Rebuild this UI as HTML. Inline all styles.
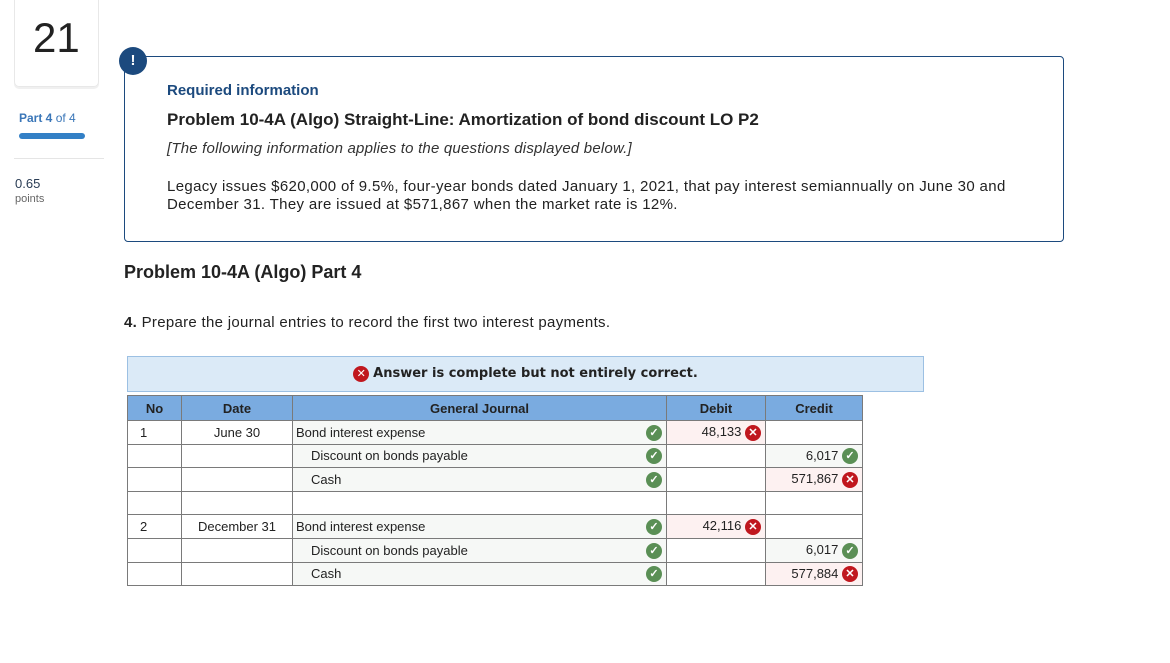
<!DOCTYPE html>
<html><head><meta charset="utf-8"><style>
body{margin:0;width:1170px;height:663px;background:#fff;font-family:"Liberation Sans",Arial,sans-serif;position:relative;overflow:hidden;color:#222}
.abs{position:absolute}
.card{left:14px;top:-10px;width:83px;height:95px;border:1px solid #e8e8e8;border-radius:5px;box-shadow:0 2px 0 #f0f0f0}
.box{left:124px;top:56px;width:938px;height:184px;border:1px solid #1c4a7e;border-radius:4px}
table{border-collapse:collapse;font-size:13px;position:absolute;left:127px;top:395px}
td,th{border:1px solid #7a7a7a;height:22.6px;padding:0 4px}
th{background:#7aabe0;font-weight:bold;font-size:13px;height:24px}
.ok,.x{display:inline-block;width:16px;height:16px;border-radius:50%;vertical-align:middle;position:relative;color:#fff;font-size:11px;line-height:16px;text-align:center;font-weight:bold}
.ok{background:#5a8f55}.x{background:#c0171e}
.gj{background:#f6f8f6}
.pink{background:#fdf1f1}
</style></head><body>
<div class="abs card"></div>
<div class="abs" style="left:33px;top:14px;font-size:42px;color:#222">21</div>
<div class="abs" style="left:19px;top:111px;font-size:12px;color:#3a76b8"><b>Part 4</b> of 4</div>
<div class="abs" style="left:19px;top:133px;width:66px;height:6px;border-radius:3px;background:#3380c6"></div>
<div class="abs" style="left:14px;top:158px;width:90px;height:1px;background:#e5e5e5"></div>
<div class="abs" style="left:15px;top:176px;font-size:13px;color:#2a3d55">0.65</div>
<div class="abs" style="left:15px;top:193px;font-size:11px;color:#666">points</div>
<div class="abs box"></div>
<div class="abs" style="left:119px;top:47px;width:28px;height:28px;border-radius:50%;background:#1c4a7e;color:#fff;text-align:center;line-height:28px;font-weight:bold;font-size:15px">!</div>
<div class="abs" style="left:167px;top:82px;font-size:15px;font-weight:bold;color:#1c4a7e">Required information</div>
<div class="abs" style="left:167px;top:110px;font-size:17px;font-weight:bold;color:#222">Problem 10-4A (Algo) Straight-Line: Amortization of bond discount LO P2</div>
<div class="abs" style="left:167px;top:140px;font-size:15px;font-style:italic;color:#333;letter-spacing:0.2px">[The following information applies to the questions displayed below.]</div>
<div class="abs" style="left:167px;top:178px;font-size:15px;line-height:18px;color:#222;letter-spacing:0.35px">Legacy issues $620,000 of 9.5%, four-year bonds dated January 1, 2021, that pay interest semiannually on June 30 and<br>December 31. They are issued at $571,867 when the market rate is 12%.</div>
<div class="abs" style="left:124px;top:262px;font-size:18px;font-weight:bold">Problem 10-4A (Algo) Part 4</div>
<div class="abs" style="left:124px;top:314px;font-size:15px;letter-spacing:0.3px"><b>4.</b> Prepare the journal entries to record the first two interest payments.</div>
<div class="abs" style="left:127px;top:356px;width:795px;height:34px;background:#dbeaf7;border:1px solid #9cc0e3;text-align:center;line-height:34px;font-size:13px;font-weight:bold;font-family:'DejaVu Sans',sans-serif"><span class="x" style="margin-right:4px">✕</span>Answer is complete but not entirely correct.</div>
<table>
<tr><th style="width:45px">No</th><th style="width:102px">Date</th><th colspan="2" style="width:365px">General Journal</th><th style="width:90px">Debit</th><th style="width:88px">Credit</th></tr>
<tr><td style="padding-left:12px">1</td><td style="text-align:center">June 30</td><td class="gj" style="border-right:0;width:335px;padding-left:3px">Bond interest expense</td><td class="gj" style="border-left:0;text-align:right"><span class="ok">✓</span></td><td class="pink" style="text-align:right">48,133 <span class="x">✕</span></td><td></td></tr>
<tr><td></td><td></td><td class="gj" style="border-right:0;padding-left:18px">Discount on bonds payable</td><td class="gj" style="border-left:0;text-align:right"><span class="ok">✓</span></td><td></td><td class="gj" style="text-align:right">6,017 <span class="ok">✓</span></td></tr>
<tr><td></td><td></td><td class="gj" style="border-right:0;padding-left:18px">Cash</td><td class="gj" style="border-left:0;text-align:right"><span class="ok">✓</span></td><td></td><td class="pink" style="text-align:right">571,867 <span class="x">✕</span></td></tr>
<tr><td></td><td></td><td colspan="2"></td><td></td><td></td></tr>
<tr><td style="padding-left:12px">2</td><td style="text-align:center">December 31</td><td class="gj" style="border-right:0;padding-left:3px">Bond interest expense</td><td class="gj" style="border-left:0;text-align:right"><span class="ok">✓</span></td><td class="pink" style="text-align:right">42,116 <span class="x">✕</span></td><td></td></tr>
<tr><td></td><td></td><td class="gj" style="border-right:0;padding-left:18px">Discount on bonds payable</td><td class="gj" style="border-left:0;text-align:right"><span class="ok">✓</span></td><td></td><td class="gj" style="text-align:right">6,017 <span class="ok">✓</span></td></tr>
<tr><td></td><td></td><td class="gj" style="border-right:0;padding-left:18px">Cash</td><td class="gj" style="border-left:0;text-align:right"><span class="ok">✓</span></td><td></td><td class="pink" style="text-align:right">577,884 <span class="x">✕</span></td></tr>
</table>
</body></html>
